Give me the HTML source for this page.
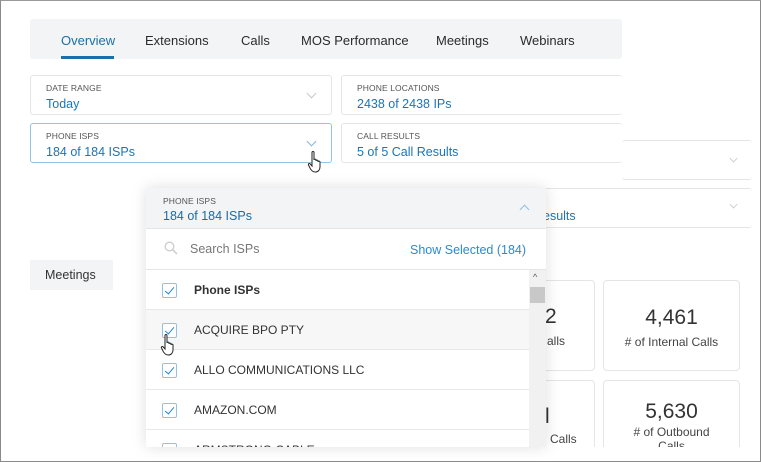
<!DOCTYPE html>
<html><head><style>
*{box-sizing:border-box;margin:0;padding:0}
html,body{width:761px;height:462px;overflow:hidden}
body{position:relative;background:#fff;font-family:"Liberation Sans",Arial,sans-serif;color:#333}
.frame{position:absolute;left:0;top:0;width:761px;height:462px;border:1px solid #8a8a8a;border-top:1px solid #9a9a9a}
.abs{position:absolute}
.tabs{left:30px;top:19px;width:592px;height:40px;background:#f2f4f6;border-radius:3px}
.tab{position:absolute;top:14px;font-size:13px;color:#2b2b2b}
.card{position:absolute;background:#fff;border:1px solid #e3e5e8;border-radius:3px}
.lbl{position:absolute;left:15px;top:7px;font-size:8.5px;color:#555;letter-spacing:.1px}
.val{position:absolute;left:15px;top:21px;font-size:12.5px;color:#1a75b8}
.chev{position:absolute;width:7px;height:7px;border-right:1.3px solid #c4c8cc;border-bottom:1.3px solid #c4c8cc;transform:rotate(45deg)}
.row{position:absolute;left:0;width:383px;height:40px;border-bottom:1px solid #e6e8ea;font-size:12px;color:#333}
.cb{position:absolute;left:16px;top:13px;width:15px;height:15px;border:1px solid #8fc3e6;border-radius:2px;background:#fff}
.cb:after{content:"";position:absolute;left:4px;top:1px;width:4px;height:8px;border-right:1.3px solid #2487cf;border-bottom:1.3px solid #2487cf;transform:rotate(40deg)}
.rt{position:absolute;left:48px;top:13px}
.stat{position:absolute;border:1px solid #e3e5e8;border-radius:4px;background:#fff;text-align:center}
.big{font-size:21px;color:#333}
.sm{font-size:12px;color:#444}
</style></head><body>
<div class="abs tabs">
 <span class="tab" style="left:31px;color:#1d6fa5">Overview</span>
 <div class="abs" style="left:31px;top:37px;width:53px;height:3px;background:#1d6fa5"></div>
 <span class="tab" style="left:115px">Extensions</span>
 <span class="tab" style="left:211px">Calls</span>
 <span class="tab" style="left:271px">MOS Performance</span>
 <span class="tab" style="left:406px">Meetings</span>
 <span class="tab" style="left:490px">Webinars</span>
</div>

<div class="card" style="left:30px;top:75px;width:302px;height:40px"><div class="lbl">DATE RANGE</div><div class="val">Today</div><div class="chev" style="left:277px;top:14px"></div></div>
<div class="card" style="left:341px;top:75px;width:281px;height:40px;border-right:none"><div class="lbl">PHONE LOCATIONS</div><div class="val">2438 of 2438 IPs</div></div>
<div class="card" style="left:30px;top:123px;width:302px;height:40px;border-color:#93c4e6"><div class="lbl">PHONE ISPS</div><div class="val">184 of 184 ISPs</div><div class="chev" style="left:277px;top:14px;border-color:#7fb6dd"></div></div>
<div class="card" style="left:341px;top:123px;width:281px;height:40px;border-right:none"><div class="lbl">CALL RESULTS</div><div class="val">5 of 5 Call Results</div></div>
<div class="card" style="left:622px;top:140px;width:130px;height:40px;border-right:none;border-left:none"><div class="chev" style="left:108px;top:14px;transform:rotate(45deg) scale(.8)"></div></div>
<div class="card" style="left:540px;top:188px;width:212px;height:40px;border-right:none;border-left:none"><div class="val" style="left:3px;top:20px">esults</div><div class="chev" style="left:190px;top:12px;transform:rotate(45deg) scale(.8)"></div></div>

<div class="abs" style="left:30px;top:260px;width:83px;height:30px;background:#f2f4f6;font-size:12.5px;padding:8px 0 0 15px;color:#333">Meetings</div>

<div class="stat" style="left:520px;top:280px;width:75px;height:91px"><div class="big" style="margin-top:24px;text-align:left;padding-left:24px">2</div><div class="sm" style="text-align:left;padding-left:26px;margin-top:5px">alls</div></div>
<div class="stat" style="left:603px;top:280px;width:137px;height:91px"><div class="big" style="margin-top:25px">4,461</div><div class="sm" style="margin-top:5px"># of Internal Calls</div></div>
<div class="stat" style="left:520px;top:380px;width:75px;height:90px"><div class="big" style="margin-top:24px;text-align:left;padding-left:24px">l</div><div class="sm" style="text-align:left;padding-left:29px;margin-top:3px">Calls</div></div>
<div class="stat" style="left:603px;top:380px;width:137px;height:90px"><div class="big" style="margin-top:19px">5,630</div><div class="sm" style="margin-top:1px;line-height:14px"># of Outbound<br>Calls</div></div>
<div class="abs" style="left:0;top:447px;width:761px;height:15px;background:#fff"></div>

<div class="abs" style="left:146px;top:188px;width:400px;height:259px;background:#fff;box-shadow:0 0 14px rgba(0,0,0,.13);overflow:hidden">
 <div class="abs" style="left:0;top:0;width:400px;height:41px;background:#f3f4f6;border-bottom:1px solid #e3e5e8">
  <div class="lbl" style="left:17px;top:8px">PHONE ISPS</div><div class="val" style="left:17px;top:21px;color:#1a6aa6">184 of 184 ISPs</div>
  <div class="chev" style="left:375px;top:18px;transform:rotate(-135deg);border-color:#8ec0e2"></div>
 </div>
 <div class="abs" style="left:0;top:41px;width:400px;height:41px;border-bottom:1px solid #e3e5e8">
  <svg class="abs" style="left:18px;top:12px" width="14" height="14" viewBox="0 0 14 14"><circle cx="5.5" cy="5.5" r="4.3" fill="none" stroke="#ccc" stroke-width="1.3"/><path d="M8.7 8.7L13 13" stroke="#ccc" stroke-width="1.5"/></svg>
  <div class="abs" style="left:44px;top:13px;font-size:12.5px;color:#777">Search ISPs</div>
  <div class="abs" style="left:264px;top:14px;font-size:12.5px;color:#2c8ad0">Show Selected (184)</div>
 </div>
 <div class="row" style="top:82px"><div class="cb"></div><div class="rt" style="font-weight:bold">Phone ISPs</div></div>
 <div class="row" style="top:122px;background:#f7f7f7"><div class="cb"></div><div class="rt">ACQUIRE BPO PTY</div></div>
 <div class="row" style="top:162px"><div class="cb"></div><div class="rt">ALLO COMMUNICATIONS LLC</div></div>
 <div class="row" style="top:202px"><div class="cb"></div><div class="rt">AMAZON.COM</div></div>
 <div class="row" style="top:242px"><div class="cb"></div><div class="rt">ARMSTRONG CABLE</div></div>
 <div class="abs" style="left:383px;top:82px;width:17px;height:177px;background:#f1f1f1"></div>
 <div class="abs" style="left:387px;top:84px;font-size:9px;color:#555">^</div>
 <div class="abs" style="left:384px;top:99px;width:15px;height:16px;background:#c8c8c8"></div>
</div>

<svg class="abs" style="left:307px;top:150px" width="18" height="24" viewBox="0 0 18 24"><path d="M5 2.5c0-1.3 2-1.3 2 0V10c0-1.2 2-1.2 2 0v1c0-1.2 2-1.2 2 0v1c0-1.2 2-1.2 2 0v5c0 3-2 5-4.5 5S5 21 3.5 19L1.5 15c-.6-1.2.8-2 1.8-1L5 16Z" fill="#fff" stroke="#222" stroke-width="1"/></svg>
<svg class="abs" style="left:160px;top:333px" width="18" height="24" viewBox="0 0 18 24"><path d="M5 2.5c0-1.3 2-1.3 2 0V10c0-1.2 2-1.2 2 0v1c0-1.2 2-1.2 2 0v1c0-1.2 2-1.2 2 0v5c0 3-2 5-4.5 5S5 21 3.5 19L1.5 15c-.6-1.2.8-2 1.8-1L5 16Z" fill="#fff" stroke="#222" stroke-width="1"/></svg>
<div class="frame"></div>
</body></html>
